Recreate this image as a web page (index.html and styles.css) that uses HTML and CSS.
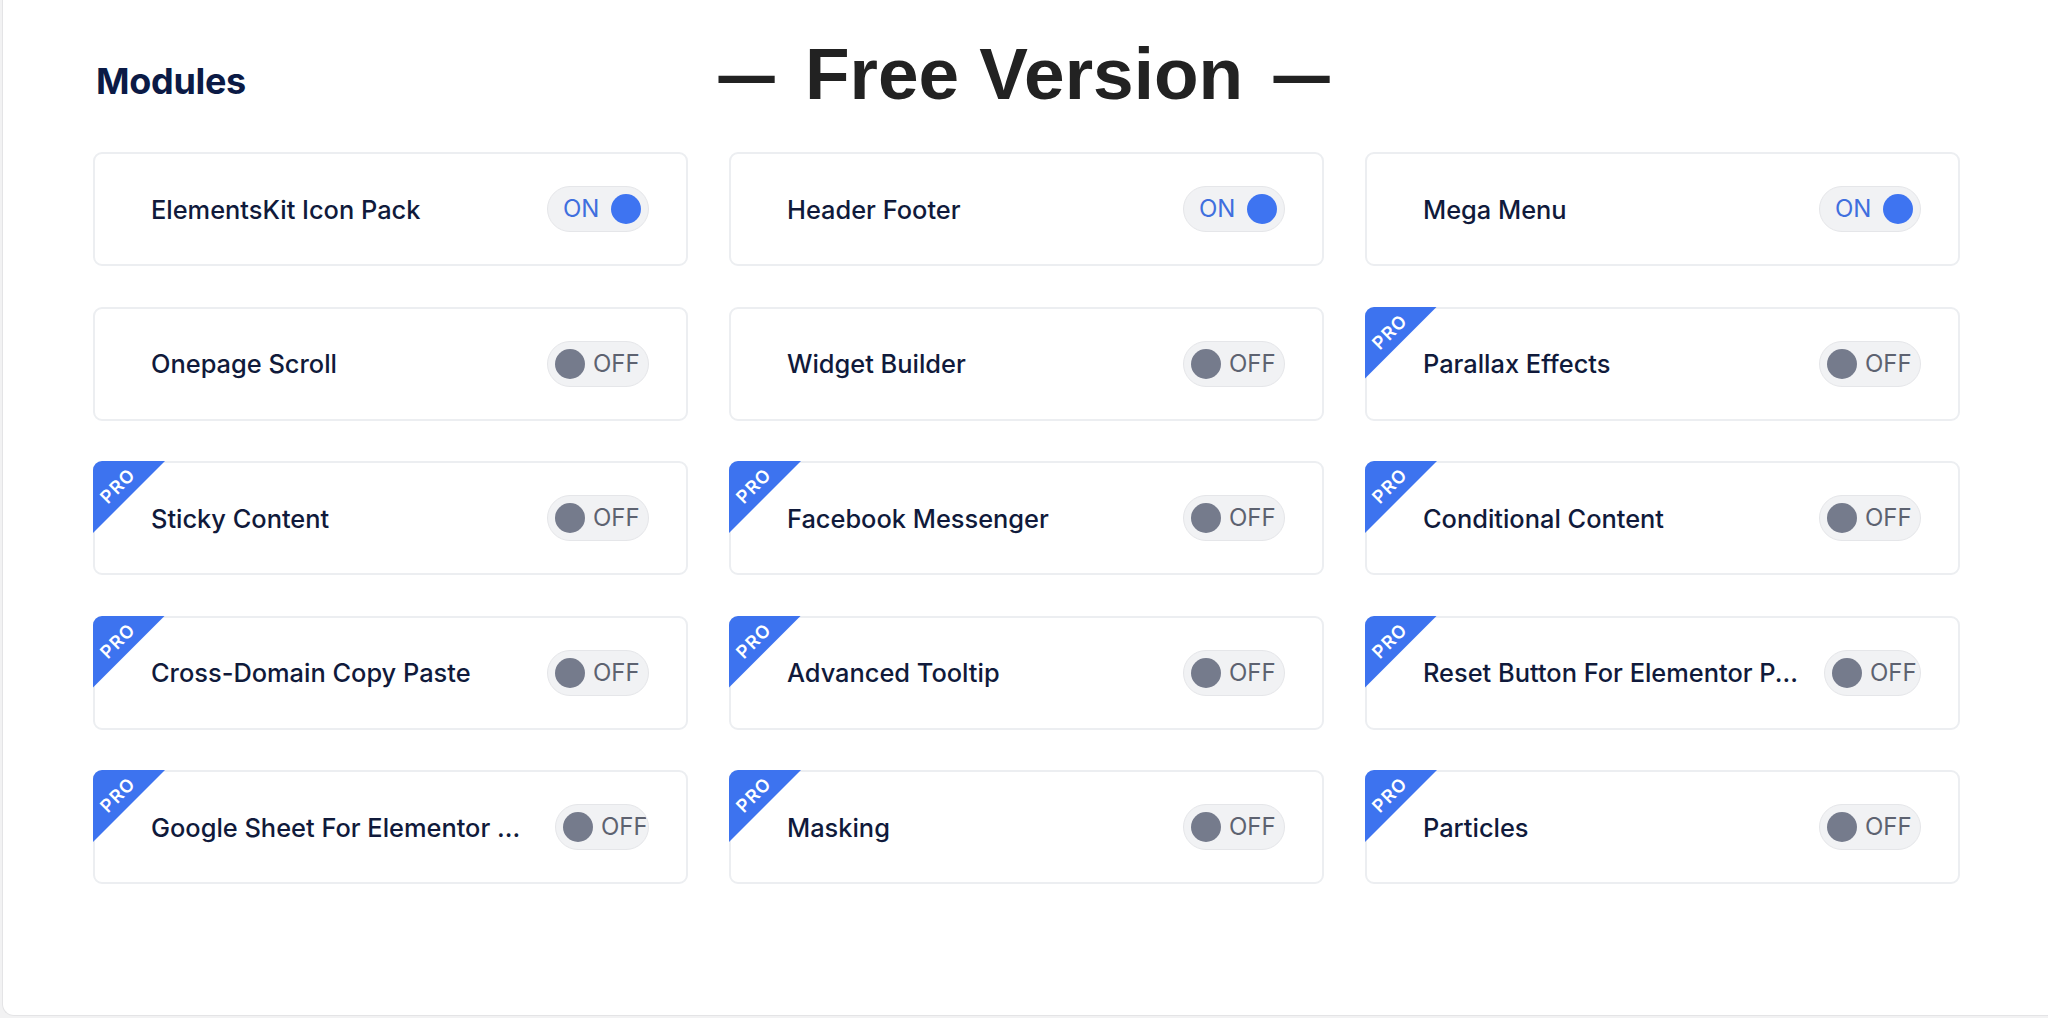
FILE: index.html
```html
<!DOCTYPE html>
<html lang="en">
<head>
<meta charset="utf-8">
<title>Modules</title>
<link rel="stylesheet" href="styles.css">
</head>
<body>
<div class="panel">
  <header class="head">
    <h2 class="title">Modules</h2>
  </header>
  <div class="grid">
    <div class="card"><span class="name">ElementsKit Icon Pack</span><span class="toggle on"><span class="lbl">ON</span><span class="knob"></span></span></div>
    <div class="card"><span class="name">Header Footer</span><span class="toggle on"><span class="lbl">ON</span><span class="knob"></span></span></div>
    <div class="card"><span class="name">Mega Menu</span><span class="toggle on"><span class="lbl">ON</span><span class="knob"></span></span></div>

    <div class="card"><span class="name">Onepage Scroll</span><span class="toggle off"><span class="knob"></span><span class="lbl">OFF</span></span></div>
    <div class="card"><span class="name">Widget Builder</span><span class="toggle off"><span class="knob"></span><span class="lbl">OFF</span></span></div>
    <div class="card pro"><span class="ribbon"><span class="ribbon-text">PRO</span></span><span class="name">Parallax Effects</span><span class="toggle off"><span class="knob"></span><span class="lbl">OFF</span></span></div>

    <div class="card pro"><span class="ribbon"><span class="ribbon-text">PRO</span></span><span class="name">Sticky Content</span><span class="toggle off"><span class="knob"></span><span class="lbl">OFF</span></span></div>
    <div class="card pro"><span class="ribbon"><span class="ribbon-text">PRO</span></span><span class="name">Facebook Messenger</span><span class="toggle off"><span class="knob"></span><span class="lbl">OFF</span></span></div>
    <div class="card pro"><span class="ribbon"><span class="ribbon-text">PRO</span></span><span class="name">Conditional Content</span><span class="toggle off"><span class="knob"></span><span class="lbl">OFF</span></span></div>

    <div class="card pro"><span class="ribbon"><span class="ribbon-text">PRO</span></span><span class="name">Cross-Domain Copy Paste</span><span class="toggle off"><span class="knob"></span><span class="lbl">OFF</span></span></div>
    <div class="card pro"><span class="ribbon"><span class="ribbon-text">PRO</span></span><span class="name">Advanced Tooltip</span><span class="toggle off"><span class="knob"></span><span class="lbl">OFF</span></span></div>
    <div class="card pro"><span class="ribbon"><span class="ribbon-text">PRO</span></span><span class="name">Reset Button For Elementor P...</span><span class="toggle off squeeze-a"><span class="knob"></span><span class="lbl">OFF</span></span></div>

    <div class="card pro"><span class="ribbon"><span class="ribbon-text">PRO</span></span><span class="name">Google Sheet For Elementor ...</span><span class="toggle off squeeze-b"><span class="knob"></span><span class="lbl">OFF</span></span></div>
    <div class="card pro"><span class="ribbon"><span class="ribbon-text">PRO</span></span><span class="name">Masking</span><span class="toggle off"><span class="knob"></span><span class="lbl">OFF</span></span></div>
    <div class="card pro"><span class="ribbon"><span class="ribbon-text">PRO</span></span><span class="name">Particles</span><span class="toggle off"><span class="knob"></span><span class="lbl">OFF</span></span></div>
  </div>
</div>
<div class="banner"><span class="dash">—</span> Free Version <span class="dash">—</span></div>
</body>
</html>
```
FILE: styles.css
```css
* { box-sizing: border-box; }
html, body { margin: 0; padding: 0; }
body {
  position: relative;
  width: 2048px;
  height: 1018px;
  overflow: hidden;
  background: #f2f2f3;
  font-family: Inter, "Noto Sans", sans-serif;
}
.panel {
  margin-left: 2px;
  height: 1016px;
  background: #ffffff;
  border-left: 1px solid #e4e4e6;
  border-bottom: 1px solid #e4e4e6;
  border-bottom-left-radius: 12px;
  padding: 59px 0 0 90px;
}
.head {
  height: 44px;
  margin-bottom: 49px;
  padding-left: 3px;
}
.title {
  margin: 0;
  font-size: 36px;
  line-height: 44px;
  font-weight: 700;
  color: #0b1a45;
  letter-spacing: -0.3px;
}
.grid {
  display: grid;
  grid-template-columns: repeat(3, 595px);
  grid-auto-rows: 114px;
  column-gap: 41px;
  row-gap: 40.5px;
}
.card {
  position: relative;
  display: flex;
  align-items: center;
  justify-content: space-between;
  background: #fff;
  border: 2px solid #eceef1;
  border-radius: 9px;
  padding: 0 37px 0 56px;
}
.name {
  font-size: 25.4px;
  font-weight: 500;
  color: #101a3b;
  white-space: nowrap;
}
.toggle {
  display: flex;
  align-items: center;
  width: 102px;
  height: 46px;
  border-radius: 23px;
  background: #f1f2f4;
  border: 1px solid #e5e6e9;
  font-size: 24px;
  line-height: 1;
  flex-shrink: 0;
}
.toggle.on {
  justify-content: space-between;
  padding: 0 7px 0 15px;
}
.toggle.off {
  padding: 0 0 0 7px;
  gap: 8px;
  overflow: hidden;
}
.toggle.squeeze-a { width: 97px; }
.toggle.squeeze-b { width: 94px; }
.knob {
  width: 30px;
  height: 30px;
  border-radius: 50%;
  flex-shrink: 0;
}
.on .knob { background: #3e74f1; }
.off .knob { background: #757b8c; }
.on .lbl { color: #3f6fde; }
.off .lbl { color: #5d6270; }
.ribbon {
  position: absolute;
  top: -2px;
  left: -2px;
  width: 72px;
  height: 72px;
  background: #3d73ef;
  clip-path: polygon(0 0, 100% 0, 0 100%);
  border-top-left-radius: 9px;
}
.ribbon-text {
  position: absolute;
  left: 25px;
  top: 25px;
  transform: translate(-50%, -50%) rotate(-45deg);
  color: #fff;
  font-size: 18px;
  font-weight: 600;
  letter-spacing: 1.2px;
  line-height: 1;
}
.banner {
  position: absolute;
  top: 37px;
  left: 0;
  right: 0;
  text-align: center;
  font-family: "Liberation Sans", Arial, sans-serif;
  font-weight: 700;
  font-size: 73px;
  line-height: 73px;
  color: #222222;
  white-space: nowrap;
}
.dash {
  display: inline-block;
  transform: scaleX(0.77);
  margin: 0 2px;
}
```
